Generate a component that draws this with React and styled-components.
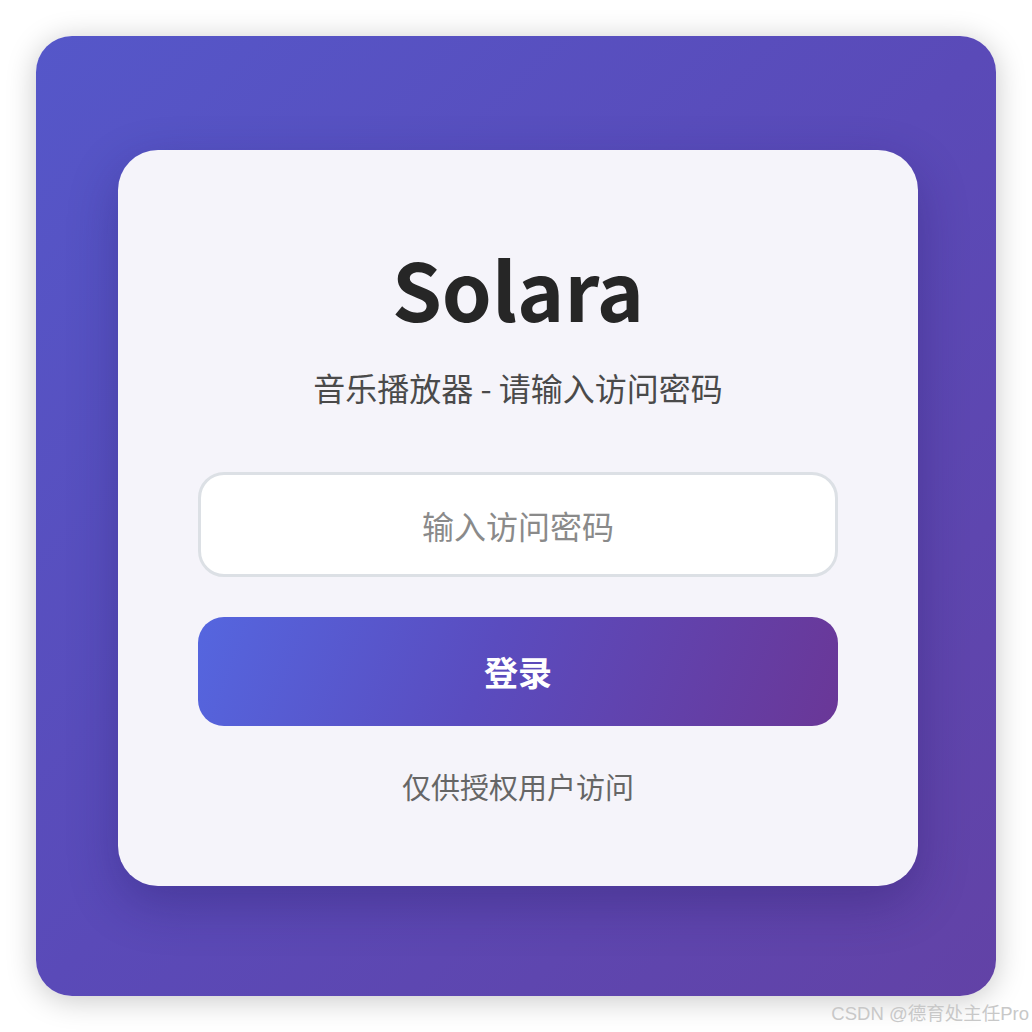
import styled, { createGlobalStyle } from "styled-components";

const GlobalStyle = createGlobalStyle`
  html, body {
    margin: 0;
    padding: 0;
    background: #ffffff;
  }
  body {
    font-family: "Noto Sans CJK SC", "Noto Sans", sans-serif;
  }
  * {
    box-sizing: border-box;
  }
`;

const Page = styled.div`
  position: relative;
  width: 1032px;
  height: 1032px;
  padding: 36px;
`;

const Stage = styled.div`
  width: 960px;
  height: 960px;
  border-radius: 36px;
  background: linear-gradient(135deg, #5557c9 0%, #5a4ab8 50%, #6242a6 100%);
  box-shadow: 0 4px 30px rgba(0, 0, 0, 0.22);
  display: flex;
  justify-content: center;
  padding: 114px 0 0 4px;
`;

const Card = styled.div`
  width: 800px;
  height: 736px;
  border-radius: 40px;
  background: #f5f4fa;
  box-shadow: 0 18px 50px rgba(30, 20, 90, 0.3);
  padding: 84px 80px 0;
  display: flex;
  flex-direction: column;
  align-items: center;
  text-align: center;
`;

const Title = styled.h1`
  margin: 0;
  font-size: 80px;
  line-height: 106px;
  font-weight: 700;
  color: #262626;
`;

const Subtitle = styled.p`
  margin: 23px 0 0;
  font-size: 32px;
  line-height: 48px;
  color: #4a4a4a;
`;

const PasswordInput = styled.input`
  margin-top: 61px;
  width: 640px;
  height: 105px;
  border: 3px solid #dce0e5;
  border-radius: 26px;
  background: #ffffff;
  font-family: inherit;
  font-size: 32px;
  text-align: center;
  color: #333;
  outline: none;

  &::placeholder {
    color: #8a8a8a;
  }
`;

const LoginButton = styled.button`
  margin-top: 40px;
  width: 640px;
  height: 109px;
  border: none;
  border-radius: 26px;
  background: linear-gradient(110deg, #5566df 0%, #5a4cbf 45%, #6a3797 100%);
  color: #ffffff;
  font-family: inherit;
  font-size: 34px;
  font-weight: 700;
  cursor: pointer;
`;

const Note = styled.p`
  margin: 38px 0 0;
  font-size: 29px;
  line-height: 44px;
  color: #666666;
`;

const Watermark = styled.span`
  position: absolute;
  right: 3px;
  bottom: 7px;
  font-family: "Liberation Sans", "Noto Sans CJK SC", sans-serif;
  font-size: 18.5px;
  color: #c8c8c8;
`;

export default function App() {
  return (
    <>
      <GlobalStyle />
      <Page>
        <Stage>
          <Card>
            <Title>Solara</Title>
            <Subtitle>音乐播放器 - 请输入访问密码</Subtitle>
            <PasswordInput type="password" placeholder="输入访问密码" />
            <LoginButton>登录</LoginButton>
            <Note>仅供授权用户访问</Note>
          </Card>
        </Stage>
        <Watermark>CSDN @德育处主任Pro</Watermark>
      </Page>
    </>
  );
}
